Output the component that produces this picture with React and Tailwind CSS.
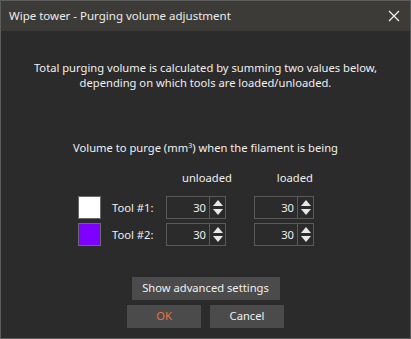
import React from 'react'

const font = { fontFamily: '"Noto Sans", "Open Sans", sans-serif' }

function Spin({ value }) {
  return (
    <div className="flex h-[23px] w-[60px] border border-[#5a5a5a] bg-[#2b2b2b]">
      <div className="flex-1 pr-[3px] text-right leading-[21px]">{value}</div>
      <div className="flex w-[16px] flex-col items-center justify-center gap-[3px] border-l border-[#5a5a5a]">
        <svg width="10" height="6" viewBox="0 0 10 6">
          <path d="M0 6 L5 0 L10 6 Z" fill="#e8e8e8" />
        </svg>
        <svg width="10" height="6" viewBox="0 0 10 6">
          <path d="M0 0 L10 0 L5 6 Z" fill="#e8e8e8" />
        </svg>
      </div>
    </div>
  )
}

function ToolRow({ color, label }) {
  return (
    <div className="flex h-[23px] items-center">
      <div className="h-[23px] w-[23px] border border-[#6a6a6a]" style={{ background: color }} />
      <div className="w-[65px] pl-[11px] leading-[23px]">{label}</div>
      <Spin value="30" />
      <div className="w-[28px]" />
      <Spin value="30" />
    </div>
  )
}

export default function App() {
  return (
    <div
      className="flex h-[339px] w-[411px] flex-col border border-[#5c5c5c] bg-[#2b2b2b] text-[11.2px] text-[#f0f0f0]"
      style={font}
    >
      {/* title bar */}
      <div className="flex h-[30px] items-center justify-between bg-[#3c3b37] pl-[8px] pr-[10px]">
        <span className="text-[11.5px] text-[#ececec]">Wipe tower - Purging volume adjustment</span>
        <svg width="12" height="12" viewBox="0 0 12 12">
          <path d="M1 1 L11 11 M11 1 L1 11" stroke="#f0f0f0" strokeWidth="1.3" />
        </svg>
      </div>

      <div className="flex flex-col">
        <p className="mt-[29px] text-center leading-[15px]">
          Total purging volume is calculated by summing two values below,
          <br />
          depending on which tools are loaded/unloaded.
        </p>

        <p className="mt-[50px] text-center leading-[15px]">
          Volume to purge (mm<span className="relative -top-[4px] text-[7px]">3</span>) when the filament is being
        </p>

        <div className="mt-[13px] flex leading-[15px]">
          <span className="ml-[181px]">unloaded</span>
          <span className="ml-[45px]">loaded</span>
        </div>

        <div className="ml-[77px] mt-[11px] flex flex-col gap-[4px]">
          <ToolRow color="#ffffff" label="Tool #1:" />
          <ToolRow color="#8000ff" label="Tool #2:" />
        </div>

        <div className="mt-[31px] flex flex-col items-center gap-[5px]">
          <button className="h-[23px] w-[148px] bg-[#4b4b4b] text-[#f0f0f0]">Show advanced settings</button>
          <div className="flex gap-[9px]">
            <button className="h-[23px] w-[74px] bg-[#4b4b4b] text-[#e8743f]">OK</button>
            <button className="h-[23px] w-[74px] bg-[#4b4b4b] text-[#f0f0f0]">Cancel</button>
          </div>
        </div>
      </div>
    </div>
  )
}
